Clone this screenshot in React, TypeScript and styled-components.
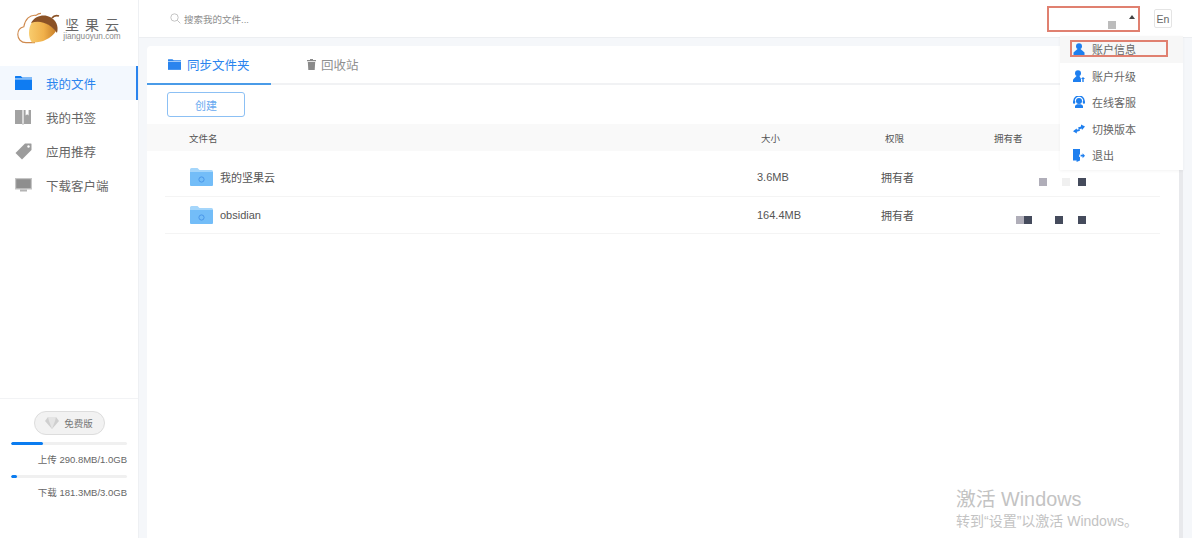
import React from "react";
import styled, { createGlobalStyle } from "styled-components";

const GlobalStyle = createGlobalStyle`
  html, body { margin: 0; padding: 0; background: #f5f7fa; }
  body { font-family: "Liberation Sans", "Noto Sans CJK SC", sans-serif; color: #555; }
  * { box-sizing: border-box; }
`;

const FolderIcon = ({ color, w, h }: { color: string; w: number; h: number }) => (
  <svg width={w} height={h} viewBox="0 0 17 14">
    <path d="M0 .6A.6.6 0 0 1 .6 0h5.2l1.6 1.6H17v1H0z" fill={color} />
    <path d="M0 3.4h17V14H0z" fill={color} />
  </svg>
);

const BookIcon = () => (
  <svg width="16" height="15" viewBox="0 0 16 15">
    <path d="M0 0h7.4v14H0z" fill="#a2a2a2" />
    <path d="M8.6 0H16v14H8.6z" fill="#a2a2a2" />
    <path d="M7.4 13h1.2v2H7.4z" fill="#c4c4c4" />
    <path d="M10.6 0h3v5.4l-1.5-1.2-1.5 1.2z" fill="#fff" />
  </svg>
);

const TagIcon = () => (
  <svg width="17" height="17" viewBox="0 0 17 17">
    <path d="M10 0.5h6a.5.5 0 0 1 .5.5v6L7 16.5 0.5 10z" fill="#9c9c9c" />
    <circle cx="13.5" cy="3.5" r="1.2" fill="#fff" />
  </svg>
);

const MonitorIcon = () => (
  <svg width="17" height="14" viewBox="0 0 17 14">
    <rect x="0" y="0" width="17" height="11.5" fill="#c6c6c6" />
    <rect x="1.2" y="1.2" width="14.6" height="9" fill="#8e8e8e" />
    <rect x="5" y="11.5" width="7" height="2" fill="#b4b4b4" />
  </svg>
);

const TrashIcon = () => (
  <svg width="9" height="11" viewBox="0 0 9 11">
    <path d="M3 0h3v1h3v1.2H0V1h3z" fill="#8a8a8a" />
    <path d="M.8 3h7.4l-.5 8H1.3z" fill="#8a8a8a" />
  </svg>
);

const SearchIcon = () => (
  <svg width="11" height="11" viewBox="0 0 11 11" fill="none" stroke="#c4c4c4" strokeWidth="1">
    <circle cx="4.5" cy="4.5" r="3.7" />
    <path d="M7.3 7.3 10.3 10.3" />
  </svg>
);

const RowFolder = () => (
  <svg width="23" height="18" viewBox="0 0 23 18">
    <path d="M0 1.5A1.5 1.5 0 0 1 1.5 0h6l2 2h12A1.5 1.5 0 0 1 23 3.5V5H0z" fill="#a5d6fb" />
    <path d="M0 4h23v13a1 1 0 0 1-1 1H1a1 1 0 0 1-1-1z" fill="#73bdf8" />
    <circle cx="11.5" cy="11.5" r="2.6" fill="none" stroke="#4a97ea" strokeWidth="1" />
  </svg>
);

const Logo = () => (
  <svg width="44" height="32" viewBox="0 0 44 32">
    <defs>
      <linearGradient id="nut" x1="0" y1="0" x2="1" y2="0">
        <stop offset="0" stopColor="#f8cc6e" />
        <stop offset="0.55" stopColor="#f0b04a" />
        <stop offset="1" stopColor="#c97f28" />
      </linearGradient>
    </defs>
    <path
      d="M18 30.6H9C4 30.6.8 27 .8 22.6c0-4 2.4-7 6-7.8C8 7.4 13 2.4 19 3.4c1.6-1.4 3.4-2 5-2"
      fill="#fff"
      stroke="#cf8a4e"
      strokeWidth="1.1"
    />
    <path d="M15 10C11 16 11 26 15 30.5 24 31 34 27 39 19 33 11 22 7 15 10z" fill="url(#nut)" />
    <path d="M14 11C18 3 28 2 33 5c6 3 9 9 7 16C35 13 24 7 14 11z" fill="#8b5226" />
    <path d="M35 6c1.500-2 4-3 7-2" fill="none" stroke="#8b5226" strokeWidth="1.8" />
  </svg>
);

const DropUser = () => (
  <svg width="12" height="12" viewBox="0 0 12 12">
    <circle cx="6" cy="3.2" r="3" fill="#1e7fef" />
    <path d="M4.5 6h3l4 3.6V12H.5V9.6z" fill="#1e7fef" />
  </svg>
);

const DropUpgrade = () => (
  <svg width="12" height="12" viewBox="0 0 12 12">
    <circle cx="5" cy="3.2" r="3" fill="#1e7fef" />
    <path d="M3.5 6h3L8 9v3H0V9.6z" fill="#1e7fef" />
    <path d="M10 7l2 2h-1.3v3H9.3V9H8z" fill="#1e7fef" />
  </svg>
);

const DropService = () => (
  <svg width="12" height="12" viewBox="0 0 12 12">
    <path d="M1 5a5 5 0 0 1 10 0" fill="none" stroke="#1e7fef" strokeWidth="1.4" />
    <rect x="0" y="4.4" width="2.2" height="3.4" rx="1" fill="#1e7fef" />
    <rect x="9.8" y="4.4" width="2.2" height="3.4" rx="1" fill="#1e7fef" />
    <circle cx="6" cy="5" r="3" fill="#1e7fef" />
    <path d="M4 8.2h4l2 1.6V12H2V9.8z" fill="#1e7fef" />
  </svg>
);

const DropSwitch = () => (
  <svg width="12" height="10" viewBox="0 0 12 10">
    <path d="M5 3.6l3-1V.4L12 2.4 9 6 8.6 4.4 6 5.4z" fill="#1e7fef" />
    <path d="M6.4 5 4 5.8 3.6 4.4 0 7.2l3.8 2.4V7.8L7 6.8z" fill="#1e7fef" />
  </svg>
);

const DropExit = () => (
  <svg width="12" height="13" viewBox="0 0 12 13">
    <path d="M0 0h7v5.4H6.2V8H7v3.4L3.6 13v-1.6H0z" fill="#1e7fef" />
    <path d="M7.6 5.8h2V4.2L12 6.7 9.6 9.2V7.600h-2z" fill="#1e7fef" />
  </svg>
);

const Page = styled.div`
  display: grid;
  grid-template-columns: 139px 1fr;
  width: 1192px;
  height: 538px;
  overflow: hidden;
  position: relative;
`;

const Sidebar = styled.aside`
  display: flex;
  flex-direction: column;
  background: #fff;
  border-right: 1px solid #eef0f3;
  height: 538px;
`;

const Brand = styled.div`
  display: flex;
  align-items: flex-start;
  gap: 2px;
  height: 66px;
  padding: 12px 0 0 17px;
`;

const BrandText = styled.div`
  display: flex;
  flex-direction: column;
  align-items: center;
  width: 58px;
  padding-top: 6px;
`;

const BrandName = styled.span`
  font-size: 14px;
  line-height: 14px;
  letter-spacing: 6px;
  margin-right: -6px;
  color: #666;
`;

const BrandUrl = styled.span`
  font-size: 8.2px;
  line-height: 10px;
  margin-top: 0;
  color: #888;
  white-space: nowrap;
`;

const Nav = styled.nav`
  display: flex;
  flex-direction: column;
  flex: 1;
`;

const NavItem = styled.div<{ $active?: boolean }>`
  display: flex;
  align-items: center;
  height: 34px;
  padding-left: 15px;
  font-size: 12.5px;
  color: ${(p) => (p.$active ? "#2a84ee" : "#666")};
  background: ${(p) => (p.$active ? "#f3f8fe" : "transparent")};
  border-right: 2px solid ${(p) => (p.$active ? "#2a84ee" : "transparent")};
`;

const NavIcon = styled.span`
  display: flex;
  align-items: center;
  width: 31px;
`;

const Quota = styled.div`
  height: 140px;
  border-top: 1px solid #f2f3f5;
  padding: 12px 11px 0;
  display: flex;
  flex-direction: column;
`;

const PlanPill = styled.div`
  align-self: center;
  display: flex;
  align-items: center;
  justify-content: center;
  gap: 5px;
  width: 71px;
  height: 24px;
  margin-bottom: 7px;
  border: 1px solid #ddd;
  border-radius: 12px;
  background: #f2f2f2;
  font-size: 9.5px;
  color: #777;
`;

const Bar = styled.div`
  height: 3px;
  border-radius: 2px;
  background: #f0f0f0;
  overflow: hidden;
`;

const BarFill = styled.div`
  height: 100%;
  border-radius: 2px;
  background: #0a7cf0;
`;

const QuotaText = styled.div`
  height: 30px;
  padding-top: 8px;
  text-align: right;
  font-size: 9.5px;
  line-height: 14px;
  color: #666;
`;

const Main = styled.div`
  display: flex;
  flex-direction: column;
  min-width: 0;
`;

const Header = styled.header`
  display: flex;
  align-items: center;
  height: 38px;
  padding: 0 20px 0 31px;
  background: #fff;
  border-bottom: 1px solid #eceef1;
`;

const Search = styled.div`
  display: flex;
  align-items: center;
  gap: 3px;
  flex: 1;
  font-size: 9.5px;
  color: #8d8d8d;
`;

const UserBox = styled.div`
  position: relative;
  width: 93px;
  height: 26px;
  margin-right: 14px;
  border: 2px solid #e08070;
`;

const UserPixel = styled.span`
  position: absolute;
  left: 59px;
  top: 13px;
  width: 8px;
  height: 8px;
  background: #bcbcbc;
`;

const Caret = styled.span`
  position: absolute;
  right: 3px;
  top: 7px;
  width: 0;
  height: 0;
  border-left: 3.5px solid transparent;
  border-right: 3.5px solid transparent;
  border-bottom: 4px solid #444;
`;

const LangButton = styled.div`
  display: flex;
  align-items: center;
  justify-content: center;
  width: 18px;
  height: 19px;
  border: 1px solid #e4e4e4;
  border-radius: 2px;
  font-size: 10.5px;
  color: #666;
`;

const Content = styled.main`
  flex: 1;
  padding: 8px 9px 0 8px;
  min-height: 0;
`;

const Card = styled.section`
  display: flex;
  height: 100%;
  background: #fff;
  border-radius: 4px 4px 0 0;
`;

const CardBody = styled.div`
  flex: 1;
  min-width: 0;
`;

const ScrollTrack = styled.div`
  width: 4px;
  margin-top: 124px;
  background: #e8e9ec;
`;

const Tabs = styled.div`
  display: flex;
  height: 39px;
  border-bottom: 2px solid #f1f2f4;
`;

const Tab = styled.div<{ $active?: boolean }>`
  display: flex;
  align-items: center;
  gap: ${(p) => (p.$active ? "6px" : "5px")};
  width: ${(p) => (p.$active ? "124px" : "auto")};
  height: 39px;
  padding-left: ${(p) => (p.$active ? "21px" : "36px")};
  font-size: 12.5px;
  color: ${(p) => (p.$active ? "#2a84ee" : "#8f8f8f")};
  border-bottom: 2px solid ${(p) => (p.$active ? "#4a9be8" : "transparent")};
`;

const Toolbar = styled.div`
  height: 39px;
  padding: 7px 0 0 20px;
`;

const CreateButton = styled.button`
  display: block;
  width: 78px;
  height: 25px;
  padding: 0;
  background: #fff;
  border: 1px solid #8cc0f4;
  border-radius: 3px;
  font: inherit;
  font-size: 11px;
  color: #6aaaf0;
`;

const TableHead = styled.div`
  display: grid;
  grid-template-columns: 572px 124px 109px 1fr;
  align-items: center;
  height: 27px;
  padding-left: 42px;
  background: #f9f9f9;
  font-size: 9.5px;
  color: #555;
  margin-bottom: 8px;
`;

const Row = styled.div`
  display: grid;
  grid-template-columns: 567px 124px 135px 1fr;
  align-items: center;
  height: 37.5px;
  margin: 0 19px 0 18px;
  padding-left: 25px;
  border-bottom: 1px solid #f4f4f4;
  font-size: 11px;
  color: #555;
`;

const NameCell = styled.div`
  display: flex;
  align-items: center;
  gap: 7px;
`;

const OwnerCell = styled.div`
  display: flex;
  padding-top: 10px;
`;

const Pixel = styled.span<{ $color: string; $skip: number }>`
  width: 8px;
  height: 8px;
  margin-left: ${(p) => p.$skip}px;
  background: ${(p) => p.$color};
`;

const Menu = styled.div`
  position: absolute;
  left: 1060px;
  top: 36px;
  width: 123px;
  height: 134px;
  background: #fff;
  box-shadow: 0 1px 3px rgba(0, 0, 0, 0.05);
`;

const MenuItem = styled.div<{ $active?: boolean }>`
  display: flex;
  align-items: center;
  gap: 7px;
  height: 26.5px;
  padding-left: 13px;
  font-size: 11px;
  color: #666;
  background: ${(p) => (p.$active ? "#f7f7f7" : "#fff")};
`;

const MenuIcon = styled.span`
  display: flex;
  justify-content: center;
  width: 12px;
`;

const Highlight = styled.span`
  position: absolute;
  left: 10px;
  top: 4px;
  width: 98px;
  height: 17px;
  border: 2px solid #e08070;
`;

const Watermark = styled.div`
  position: absolute;
  left: 956px;
  top: 487px;
  color: #c3c3c3;
  pointer-events: none;
`;

const WatermarkTitle = styled.div`
  font-size: 19.8px;
  line-height: 24px;
`;

const WatermarkSub = styled.div`
  font-size: 14px;
  line-height: 20px;
`;

type FileRow = {
  name: string;
  size: string;
  pixels: { color: string; skip: number }[];
};

const files: FileRow[] = [
  {
    name: "我的坚果云",
    size: "3.6MB",
    pixels: [
      { color: "#b0aeb9", skip: 23 },
      { color: "#f0f0f0", skip: 15 },
      { color: "#454b5c", skip: 8 },
    ],
  },
  {
    name: "obsidian",
    size: "164.4MB",
    pixels: [
      { color: "#b0aeb9", skip: 0 },
      { color: "#454b5c", skip: 0 },
      { color: "#454b5c", skip: 23 },
      { color: "#454b5c", skip: 15 },
    ],
  },
];

const menuItems = [
  { label: "账户信息", icon: <DropUser /> },
  { label: "账户升级", icon: <DropUpgrade /> },
  { label: "在线客服", icon: <DropService /> },
  { label: "切换版本", icon: <DropSwitch /> },
  { label: "退出", icon: <DropExit /> },
];

export default function App() {
  return (
    <Page>
      <GlobalStyle />
      <Sidebar>
        <Brand>
          <Logo />
          <BrandText>
            <BrandName>坚果云</BrandName>
            <BrandUrl>jianguoyun.com</BrandUrl>
          </BrandText>
        </Brand>
        <Nav>
          <NavItem $active>
            <NavIcon>
              <FolderIcon color="#0f7cf2" w={17} h={14} />
            </NavIcon>
            我的文件
          </NavItem>
          <NavItem>
            <NavIcon>
              <BookIcon />
            </NavIcon>
            我的书签
          </NavItem>
          <NavItem>
            <NavIcon>
              <TagIcon />
            </NavIcon>
            应用推荐
          </NavItem>
          <NavItem>
            <NavIcon>
              <MonitorIcon />
            </NavIcon>
            下载客户端
          </NavItem>
        </Nav>
        <Quota>
          <PlanPill>
            <svg width="14" height="12" viewBox="0 0 14 12">
              <path d="M3 0h8l3 4-7 8-7-8z" fill="#cfcfcf" />
              <path d="M3 0h8l-1 4H4zM4 4h6l-3 8z" fill="#e4e4e4" />
            </svg>
            免费版
          </PlanPill>
          <Bar>
            <BarFill style={{ width: "28%" }} />
          </Bar>
          <QuotaText>上传 290.8MB/1.0GB</QuotaText>
          <Bar>
            <BarFill style={{ width: "5%" }} />
          </Bar>
          <QuotaText>下载 181.3MB/3.0GB</QuotaText>
        </Quota>
      </Sidebar>

      <Main>
        <Header>
          <Search>
            <SearchIcon />
            搜索我的文件...
          </Search>
          <UserBox>
            <UserPixel />
            <Caret />
          </UserBox>
          <LangButton>En</LangButton>
        </Header>
        <Content>
          <Card>
            <CardBody>
              <Tabs>
                <Tab $active>
                  <FolderIcon color="#2a84ee" w={13} h={11} />
                  同步文件夹
                </Tab>
                <Tab>
                  <TrashIcon />
                  回收站
                </Tab>
              </Tabs>
              <Toolbar>
                <CreateButton>创建</CreateButton>
              </Toolbar>
              <TableHead>
                <span>文件名</span>
                <span>大小</span>
                <span>权限</span>
                <span>拥有者</span>
              </TableHead>
              {files.map((f) => (
                <Row key={f.name}>
                  <NameCell>
                    <RowFolder />
                    {f.name}
                  </NameCell>
                  <span>{f.size}</span>
                  <span>拥有者</span>
                  <OwnerCell>
                    {f.pixels.map((px, i) => (
                      <Pixel key={i} $color={px.color} $skip={px.skip} />
                    ))}
                  </OwnerCell>
                </Row>
              ))}
            </CardBody>
            <ScrollTrack />
          </Card>
        </Content>
      </Main>

      <Menu>
        {menuItems.map((item, i) => (
          <MenuItem key={item.label} $active={i === 0}>
            <MenuIcon>{item.icon}</MenuIcon>
            {item.label}
          </MenuItem>
        ))}
        <Highlight />
      </Menu>

      <Watermark>
        <WatermarkTitle>激活 Windows</WatermarkTitle>
        <WatermarkSub>转到“设置”以激活 Windows。</WatermarkSub>
      </Watermark>
    </Page>
  );
}
